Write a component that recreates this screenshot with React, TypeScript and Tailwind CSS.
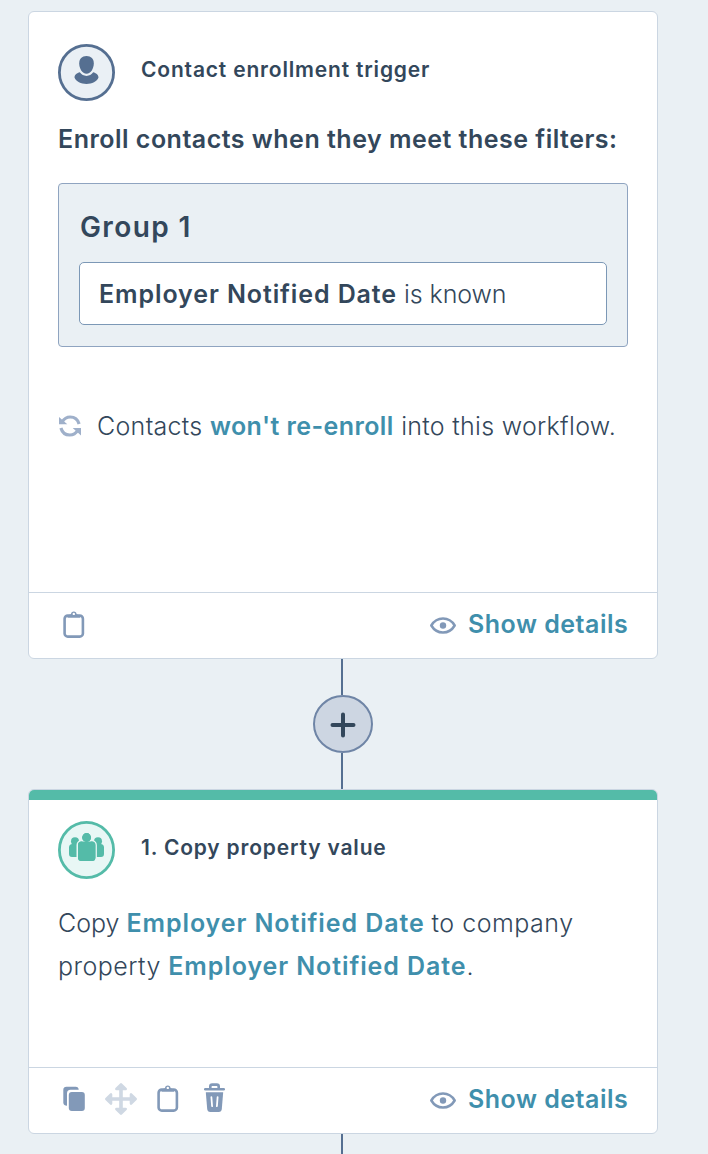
import React from 'react';

const ContactIcon: React.FC = () => (
  <svg width="57" height="57" viewBox="0 0 57 57" className="block">
    <circle cx="28.5" cy="28.5" r="27.1" fill="#eaf0f5" stroke="#556f91" strokeWidth="2.8" />
    <path d="M28.5 12c4.6 0 7.3 3 7.3 7.3 0 5.3-2.9 10.4-7.3 10.4s-7.3-5.1-7.3-10.4C21.2 15 23.9 12 28.5 12z" fill="#556f91" />
    <path d="M21.8 28.3c1.7 2.3 3.9 3.6 6.7 3.6s5-1.3 6.7-3.6c2.6.7 5.3 2.4 5.3 5.3-1.5 3.9-6.5 6.4-12 6.4s-10.5-2.5-12-6.4c0-2.9 2.7-4.6 5.3-5.3z" fill="#556f91" />
  </svg>
);

const CompanyIcon: React.FC = () => (
  <svg width="57" height="58" viewBox="0 0 57 58" className="block">
    <ellipse cx="28.5" cy="29" rx="27.1" ry="27.6" fill="#e8f7f5" stroke="#54bba8" strokeWidth="2.8" />
    <g fill="#54bba8">
      <circle cx="17" cy="20.3" r="4" />
      <circle cx="40" cy="20.3" r="4" />
      <path d="M14.5 23h5v13h-5.500a3 3 0 0 1-3-3v-6.500a3.500 3.500 0 0 1 3.500-3.500zM38 23h4.500a3.500 3.500 0 0 1 3.500 3.500V33a3 3 0 0 1-3 3h-5z" />
    </g>
    <g fill="#54bba8" stroke="#e8f7f5" strokeWidth="3" paintOrder="stroke">
      <rect x="20" y="20.5" width="17.4" height="19.5" rx="3.5" />
      <circle cx="28.6" cy="16.5" r="4.4" />
    </g>
    <rect x="20" y="20.5" width="17.4" height="19.5" rx="3.5" fill="#54bba8" />
    <circle cx="28.6" cy="16.5" r="4.4" fill="#54bba8" />
  </svg>
);

const RefreshIcon: React.FC = () => (
  <svg width="24" height="24" viewBox="0 0 24 24" className="block shrink-0">
    <g fill="none" stroke="#9fb0ca" strokeWidth="3.2">
      <path d="M4.2 7.8C6 4.8 8.8 3 12.2 3c4.3 0 7.6 2.5 8.9 7" />
      <path d="M2.9 14c1.3 4.500 4.600 7 8.900 7 3.400 0 6.200-1.800 8-4.800" />
    </g>
    <path d="M1 3l8.300 7.200H1zM23 21.500l-8.300-7.500H23z" fill="#9fb0ca" />
  </svg>
);

const ClipboardIcon: React.FC = () => (
  <svg width="22" height="28" viewBox="0 0 22 28" className="block">
    <rect x="1.600" y="4.600" width="18.300" height="21" rx="3.200" fill="none" stroke="#8299b8" strokeWidth="2.600" />
    <path d="M4.500 6.800V4.500L8 3.200C8 1.500 9.200.5 10.800.5s2.800 1 2.800 2.700L17 4.500v2.300z" fill="#8299b8" />
    <circle cx="10.800" cy="2.900" r="1.200" fill="#fff" />
  </svg>
);

const CopyIcon: React.FC = () => (
  <svg width="22" height="26" viewBox="0 0 22 26" className="block">
    <path d="M3.500.8h9.200c1.800 0 3 1 3 3H7.500c-2.200 0-3.500 1.400-3.500 3.600v12.300c-2 0-3.700-1-3.700-3V4C.3 2 1.500.8 3.500.8z" fill="#8299b8" />
    <rect x="5.800" y="6" width="16" height="19" rx="3" fill="#8299b8" />
  </svg>
);

const MoveIcon: React.FC = () => (
  <svg width="32" height="32" viewBox="0 0 32 32" className="block">
    <path d="M16 4v24M4 16h24" stroke="#cfd8e3" strokeWidth="3.6" />
    <path
      d="M16 1.400l4.600 4.600h-9.200zM16 30.600l4.600-4.600h-9.200zM1.400 16l4.600-4.600v9.200zM30.600 16l-4.600-4.600v9.200z"
      fill="#cfd8e3"
      stroke="#cfd8e3"
      strokeWidth="2.6"
      strokeLinejoin="round"
    />
  </svg>
);

const TrashIcon: React.FC = () => (
  <svg width="21" height="29" viewBox="0 0 21 29" className="block">
    <path d="M6.300 6V3.500c0-1.200.7-1.900 1.900-1.900h4.600c1.200 0 1.900.7 1.900 1.900V6" fill="none" stroke="#8299b8" strokeWidth="2.600" />
    <rect x="0" y="5" width="21" height="2.500" rx="1.200" fill="#8299b8" />
    <path d="M1.800 9.200h17.400L17.800 26c-.2 2-1.300 3-3 3H6.200c-1.700 0-2.800-1-3-3z" fill="#8299b8" />
    <path d="M7.400 14.200l.7 9M13.600 14.200l-.7 9" stroke="#fff" strokeWidth="1.800" strokeLinecap="round" />
  </svg>
);

const EyeIcon: React.FC = () => (
  <svg width="26" height="17" viewBox="0 0 26 17" className="block">
    <path d="M1.300 8.500C4 4 8.200 1.500 13 1.500S22 4 24.700 8.500C22 13 17.800 15.500 13 15.500S4 13 1.300 8.500z" fill="none" stroke="#8299b8" strokeWidth="2.500" strokeLinejoin="round" />
    <circle cx="13" cy="8.500" r="3.200" fill="#8299b8" />
  </svg>
);

const ShowDetails: React.FC = () => (
  <button className="flex items-center">
    <EyeIcon />
    <span className="ml-3 w-[160px] whitespace-nowrap pb-0.5 text-left text-[25px] font-semibold tracking-[0.5px] text-[#3f8fac]">
      Show details
    </span>
  </button>
);

const App: React.FC = () => {
  return (
    <div className="flex h-[1154px] w-[708px] flex-col overflow-hidden bg-[#eaf0f4] pl-7 pt-[11px] font-['Inter','Liberation_Sans',sans-serif] text-[#33475b]">
      {/* Enrollment trigger */}
      <div className="flex h-[648px] w-[630px] shrink-0 flex-col rounded-md border border-[#cbd6e2] bg-white">
        <div className="flex-1 px-[29px] pt-8">
          <div className="flex h-[57px]">
            <ContactIcon />
            <h2 className="ml-[26px] mt-[10px] whitespace-nowrap text-[21px] font-semibold leading-8 tracking-[0.82px]">Contact enrollment trigger</h2>
          </div>
          <h1 className="mt-[18px] whitespace-nowrap text-[25px] font-semibold leading-10 tracking-[0.49px]">
            Enroll contacts when they meet these filters:
          </h1>
          <div className="mt-6 h-[164px] w-[570px] rounded-[4px] border border-[#8fa4c0] bg-[#eaf0f4] px-5 pt-[23px]">
            <h3 className="ml-px text-[28px] font-semibold leading-10 tracking-[1.4px]">Group 1</h3>
            <div className="mt-[15px] flex h-[63px] items-center rounded-[5px] border border-[#7c98b6] bg-white px-[19px] pt-0.5 text-[25px]">
              <p className="whitespace-nowrap">
                <b className="font-semibold tracking-[0.9px]">Employer Notified Date</b> <span className="font-light tracking-[-0.1px]">is known</span>
              </p>
            </div>
          </div>
          <div className="mt-[59px] flex h-10 items-center">
            <RefreshIcon />
            <p className="ml-[15px] whitespace-nowrap text-[25px] font-light leading-10 tracking-[0.3px]">
              Contacts <b className="font-semibold tracking-[0.42px] text-[#3f8fac]">won't re-enroll</b> into this workflow.
            </p>
          </div>
        </div>
        <div className="flex h-[66px] items-center justify-between border-t border-[#cbd6e2] pl-[34px] pr-[29px]">
          <div className="pb-0.5">
            <ClipboardIcon />
          </div>
          <ShowDetails />
        </div>
      </div>

      {/* Connector */}
      <div className="flex h-[130px] w-[630px] shrink-0 flex-col items-center">
        <div className="-ml-0.5 h-9 w-0.5 bg-[#556f91]" />
        <button className="block">
          <svg width="60" height="58" viewBox="0 0 60 58" className="block">
            <ellipse cx="30" cy="29" rx="29" ry="28" fill="#cdd6e2" stroke="#6f85a6" strokeWidth="2" />
            <path d="M30 19.500v21M19.500 30h21" stroke="#33475b" strokeWidth="4" strokeLinecap="round" />
          </svg>
        </button>
        <div className="-ml-0.5 h-9 w-0.5 bg-[#556f91]" />
      </div>

      {/* Copy property action */}
      <div className="flex h-[345px] w-[630px] shrink-0 flex-col overflow-hidden rounded-md border border-[#cbd6e2] bg-white">
        <div className="h-[10px] shrink-0 bg-[#54bba8]" />
        <div className="flex-1 px-[29px] pt-[21px]">
          <div className="flex h-[58px]">
            <CompanyIcon />
            <h2 className="ml-[26px] mt-[11px] whitespace-nowrap text-[21px] font-semibold leading-8 tracking-[0.82px]">1. Copy property value</h2>
          </div>
          <p className="mt-[23px] whitespace-nowrap text-[25px] font-light leading-[43px]">
            Copy <b className="font-semibold tracking-[0.9px] text-[#3f8fac]">Employer Notified Date</b>{' '}
            <span className="tracking-[0.5px]">to company</span>
            <br />
            <span className="tracking-[0.45px]">property </span>
            <b className="font-semibold tracking-[0.9px] text-[#3f8fac]">Employer Notified Date</b>.
          </p>
        </div>
        <div className="flex h-[66px] items-center justify-between border-t border-[#cbd6e2] pl-[34px] pr-[29px]">
          <div className="flex items-center pb-1">
            <CopyIcon />
            <div className="ml-5">
              <MoveIcon />
            </div>
            <div className="ml-5">
              <ClipboardIcon />
            </div>
            <div className="ml-[25px] pb-0.5">
              <TrashIcon />
            </div>
          </div>
          <ShowDetails />
        </div>
      </div>
      <div className="ml-[313px] h-5 w-0.5 shrink-0 bg-[#556f91]" />
    </div>
  );
};

export default App;
